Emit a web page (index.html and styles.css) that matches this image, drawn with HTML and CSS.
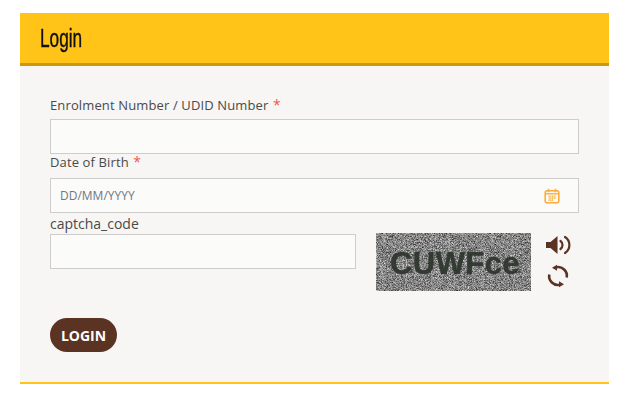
FILE: index.html
```html
<!DOCTYPE html>
<html lang="en">
<head>
<meta charset="utf-8">
<title>Login</title>
<link rel="stylesheet" href="styles.css">
</head>
<body>
<section class="panel">
  <header class="panel-head"><h1 class="panel-title">Login</h1></header>
  <form class="panel-body">
    <div class="field first">
      <label class="label">Enrolment Number / UDID Number <span class="req">*</span></label>
      <input class="input" type="text">
    </div>
    <div class="field second">
      <label class="label">Date of Birth <span class="req">*</span></label>
      <div class="date-wrap">
        <input class="input date" type="text" placeholder="DD/MM/YYYY">
        <svg class="cal" width="16" height="16" viewBox="0 0 16 16" fill="none" stroke="#fbac3a">
          <rect x="1.2" y="2.8" width="13.6" height="12" rx="2" stroke-width="1.6"/>
          <path d="M4.5 .8v3.4M11.5 .8v3.4" stroke-width="1.6"/>
          <path d="M1.5 5.8h13" stroke-width="1.4"/>
          <path d="M4 8.2h8M4 10.2h8M4 12.2h5M6 7.500v5.4M8.500 7.500v5.4M10.800 7.500v3.4" stroke-width=".8" opacity=".8"/>
        </svg>
      </div>
    </div>
    <div class="captcha-row">
      <div class="captcha-field">
        <label class="label captcha-label">captcha_code</label>
        <input class="input" type="text">
      </div>
      <div class="captcha-img">
        <svg class="noise" width="155" height="58">
          <filter id="grain" x="0" y="0" width="100%" height="100%" color-interpolation-filters="sRGB">
            <feTurbulence type="fractalNoise" baseFrequency="2.37" numOctaves="1" seed="7"/>
            <feColorMatrix type="matrix" values="1.2 0 0 0 -.08 1.2 0 0 0 -.08 1.2 0 0 0 -.08 0 0 0 0 1"/>
          </filter>
          <rect width="155" height="58" filter="url(#grain)"/>
        </svg>
        <span class="captcha-text">CUWFce</span>
      </div>
      <div class="captcha-tools">
        <svg width="26" height="24" viewBox="0 0 26 24" fill="#5b3323">
          <path d="M1 9h4.500l7-6v18l-7-6H1z"/>
          <path d="M15.500 8a5 5 0 0 1 0 8M20 4a9.500 9.500 0 0 1 0 16" fill="none" stroke="#5b3323" stroke-width="2.200" stroke-linecap="round"/>
        </svg>
        <svg width="24" height="24" viewBox="0 0 24 24" fill="none" stroke="#5b3323" stroke-width="2.600">
          <path d="M10 3.300A8.800 8.800 0 0 1 20.700 13.500"/>
          <path d="M14 20.700A8.800 8.800 0 0 1 3.300 10.500"/>
          <path d="M6 3.800l5-3v6zM18 20.200l-5 3v-6z" fill="#5b3323" stroke="none"/>
        </svg>
      </div>
    </div>
    <button class="btn" type="button">LOGIN</button>
  </form>
</section>
</body>
</html>
```
FILE: styles.css
```css
* { box-sizing: border-box; }
html, body { margin: 0; background: #fff; }
body { padding: 13px 32px 29px 20px; font-family: "Open Sans", sans-serif; color: #444; }
.panel { background: #f7f6f4; border-bottom: 2px solid #ffc417; height: 371px; }
.panel-head { background: #ffc417; border-bottom: 3px solid #cc9803; height: 53px; padding: 0 20px; display: flex; align-items: center; }
.panel-title { margin: 0; font-family: "Liberation Sans", sans-serif; font-weight: 400; font-size: 25px; line-height: 50px; height: 50px; color: #111; transform: scaleX(.69); transform-origin: left center; -webkit-text-stroke: .4px #111; }
.panel-body { padding: 28px 30px 0; }
.label { display: block; font-size: 13px; line-height: 22px; color: #4a4a4a; letter-spacing: .13px; }
.req { color: #f0584d; font-size: 14px; margin-left: 1px; }
.input { display: block; width: 100%; height: 35px; border: 1px solid #cfcdcb; background: #fbfbfa; padding: 0 9px; margin: 0; font: 12px "Open Sans", sans-serif; border-radius: 0; outline: none; }
.input::placeholder { color: #6d7882; opacity: 1; }
.field.first .label { height: 25px; }
.field.second { margin-top: -3px; }
.field.second .label { height: 27px; }
.date-wrap { position: relative; }
.cal { position: absolute; right: 19px; top: 10px; }
.captcha-row { display: flex; align-items: flex-start; }
.captcha-field { width: 306px; }
.captcha-label { font-size: 14px; line-height: 21px; letter-spacing: 0; }
.captcha-img { position: relative; width: 155px; height: 58px; margin: 20px 0 0 20px; display: flex; align-items: center; justify-content: center; }
.noise { position: absolute; inset: 0; display: block; }
.captcha-text { position: relative; font: 700 31px "Liberation Sans", sans-serif; letter-spacing: .4px; color: #2c352c; margin: 3px 0 0 3px; opacity: .92; text-shadow: 0 0 1px #2c352c; }
.captcha-tools { display: flex; flex-direction: column; align-items: center; gap: 7px; margin: 20px 0 0 14px; }
.captcha-tools svg { display: block; }
.btn { display: block; width: 67px; height: 34px; margin-top: 27px; background: #5b3323; color: #fff; border: 0; border-radius: 17px; font: 700 14px "Open Sans", sans-serif; padding: 0; }
```
